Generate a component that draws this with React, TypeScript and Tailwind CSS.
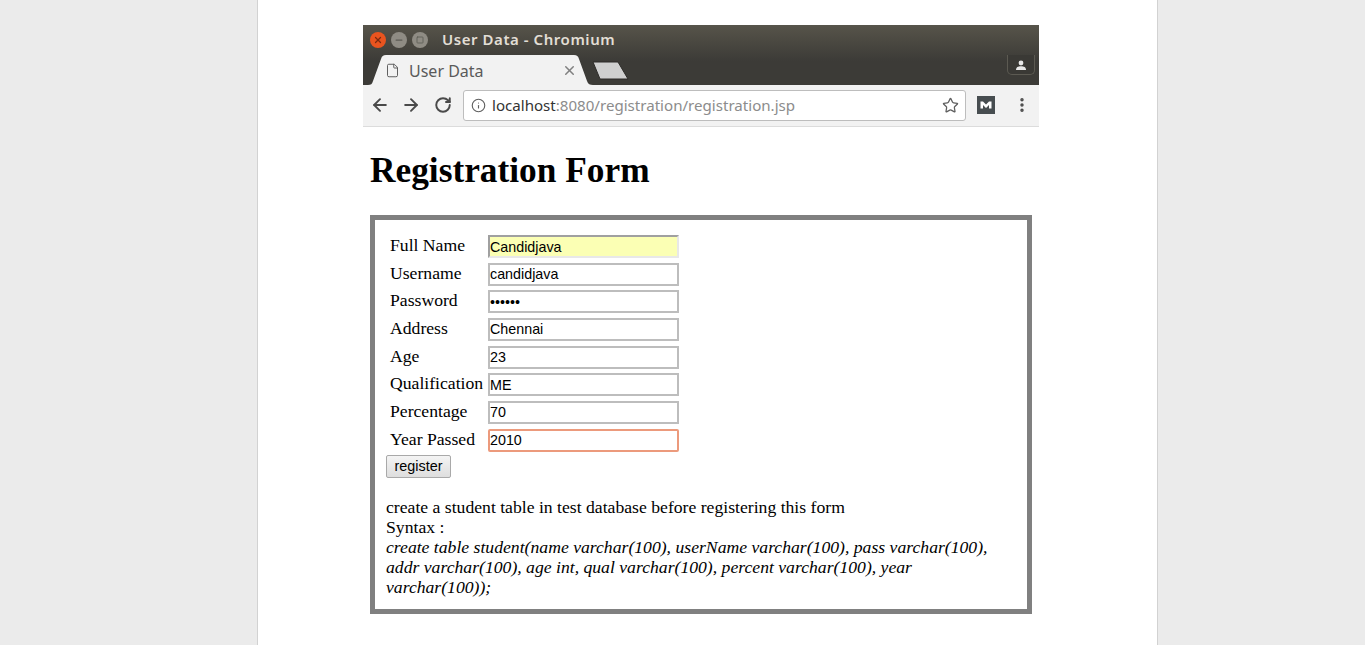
import { ArrowLeft, ArrowRight, Info, MoreVertical, RotateCw, Star, X, Minus, Square, File } from "lucide-react";

const fields = [
    { label: "Full Name", value: "Candidjava", className: "border-t-[#a0a0a0] border-l-[#a0a0a0] border-r-[#e8e8e8] border-b-[#e8e8e8] bg-[#fbffb4]" },
    { label: "Username", value: "candidjava", className: "border-[#bdbdbd] bg-white" },
    { label: "Password", value: "••••••", className: "border-[#bdbdbd] bg-white" },
    { label: "Address", value: "Chennai", className: "border-[#bdbdbd] bg-white" },
    { label: "Age", value: "23", className: "border-[#bdbdbd] bg-white" },
    { label: "Qualification", value: "ME", className: "border-[#bdbdbd] bg-white" },
    { label: "Percentage", value: "70", className: "border-[#bdbdbd] bg-white" },
    { label: "Year Passed", value: "2010", className: "rounded-[2px] border-[#ec9a7c] bg-white" },
];

function BrowserChrome() {
    return (
        <div className="w-[676px] font-['Noto_Sans',sans-serif]">
            <div className="relative h-[60px] overflow-hidden bg-gradient-to-b from-[#57544a] to-[#3c3b37] to-60%">
                <div className="flex h-[29px] items-center pl-[7px]">
                    <div className="flex h-4 w-4 items-center justify-center rounded-full bg-[#e9541f] text-[#7a2a10]">
                        <X className="h-2.5 w-2.5" strokeWidth={3} />
                    </div>
                    <div className="ml-[5px] flex h-4 w-4 items-center justify-center rounded-full bg-[#8f8c84] text-[#5d5b54]">
                        <Minus className="h-2.5 w-2.5" strokeWidth={3} />
                    </div>
                    <div className="ml-[5px] flex h-4 w-4 items-center justify-center rounded-full bg-[#8f8c84] text-[#5d5b54]">
                        <Square className="h-2 w-2" strokeWidth={2.5} />
                    </div>
                    <span className="ml-[14px] text-[15px] font-semibold tracking-[0.55px] text-[#e2ded5]">User Data - Chromium</span>
                </div>
                <div className="absolute bottom-0 left-[5px] h-[30px] w-[225px]">
                    <svg className="absolute inset-0" width="225" height="30" viewBox="0 0 225 30">
                        <path d="M0 30 C3 30 4 29 5 26 L13 4 C14 1 15 0 18 0 L206 0 C209 0 210 1 211 4 L219 26 C220 29 222 30 225 30 Z" fill="#f2f2f2" />
                    </svg>
                    <div className="relative flex h-full items-center pl-[17px]">
                        <File className="h-[15px] w-[15px] text-[#555555]" strokeWidth={1.5} />
                        <span className="ml-[9px] pt-[2px] text-[16px] text-[#5a5a5a]">User Data</span>
                        <X className="absolute left-[194px] top-[8px] h-[15px] w-[15px] text-[#808080]" strokeWidth={2.4} />
                    </div>
                </div>
                <svg className="absolute left-[229px] top-[36px]" width="38" height="19" viewBox="0 0 38 19">
                    <path d="M1 1 L26 1 L36 18 L8 18 Z" fill="#cfcfcf" stroke="#2c2b28" strokeWidth="1" />
                </svg>
                <div className="absolute right-[4px] top-[30px] flex h-5 w-[28px] items-center justify-center rounded-b-[5px] border border-t-0 border-[#5c5a52] bg-[#3a3935]">
                    <svg width="12" height="10" viewBox="0 0 12 10">
                        <circle cx="6" cy="3" r="2.4" fill="#e8e8e8" />
                        <path d="M1 10 C1 7 3 6.2 6 6.2 C9 6.2 11 7 11 10 Z" fill="#e8e8e8" />
                    </svg>
                </div>
            </div>
            <div className="flex h-[42px] items-center border-b border-[#dcdcdc] bg-[#f2f2f2] pb-px">
                <div className="flex w-[100px] items-center pl-[7px] text-[#4a4a4a]">
                    <ArrowLeft className="h-5 w-5" strokeWidth={2.3} />
                    <ArrowRight className="ml-[11px] h-5 w-5" strokeWidth={2.3} />
                    <RotateCw className="ml-[13px] h-[18px] w-[18px]" strokeWidth={2.6} />
                </div>
                <div className="flex h-[31px] w-[503px] items-center rounded-[3px] border border-[#bdbdbd] bg-white pl-[7px] text-[15.1px]">
                    <Info className="h-[15px] w-[15px] text-[#5f5f5f]" strokeWidth={1.8} />
                    <span className="ml-[6px] text-[#333333]">localhost</span>
                    <span className="text-[#8c8c8c]">:8080/registration/registration.jsp</span>
                    <Star className="ml-auto mr-[6px] h-[17px] w-[17px] text-[#5f5f5f]" strokeWidth={1.8} />
                </div>
                <svg className="ml-[11px]" width="18" height="18" viewBox="0 0 18 18">
                    <rect width="18" height="18" fill="#474d50" />
                    <path d="M3.5 12.5 V5.5 H6 L9 8.6 L12 5.5 H14.5 V12.5 H12 V9 L9 12 L6 9 V12.5 Z" fill="#ffffff" />
                </svg>
                <MoreVertical className="ml-[18px] h-[18px] w-[18px] text-[#4a4a4a]" strokeWidth={2.6} />
            </div>
        </div>
    );
}

export default function App() {
    return (
        <div className="h-[645px] overflow-hidden bg-[#ebebeb] pl-[257px]">
            <div className="h-full w-[901px] border-x border-[#d2d2d2] bg-white pl-[105px] pt-[25px]">
                <BrowserChrome />
                <div className="pl-[7px] font-['Liberation_Serif',serif] text-[17.67px] leading-[20px] text-black">
                    <h1 className="mt-[23px] text-[35.33px] font-bold leading-[41px]">Registration Form</h1>
                    <div className="mt-[24px] h-[399px] w-[662px] border-[5px] border-[#808080] bg-white pl-[11px] pt-[15px]">
                        <div className="grid grid-cols-[99px_191px] gap-y-[4.67px] pl-[3px]">
                            {fields.map((field) => (
                                <div key={field.label} className="contents">
                                    <div className="flex h-[23px] items-center pb-[3px] pl-[1px]">{field.label}</div>
                                    <div className={`flex h-[23px] items-center border-2 font-['Liberation_Sans',sans-serif] text-[14.3px] ${field.className}`}>
                                        {field.value}
                                    </div>
                                </div>
                            ))}
                        </div>
                        <button className="mt-[3px] block h-[23px] w-[65px] rounded-[2px] border border-[#a9a9a9] bg-gradient-to-b from-[#f4f4f4] to-[#dedede] font-['Liberation_Sans',sans-serif] text-[14.4px] text-black">
                            register
                        </button>
                        <p className="mt-[19px] w-[630px]">
                            create a student table in test database before registering this form
                            <br />
                            Syntax :
                            <br />
                            <i>create table student(name varchar(100), userName varchar(100), pass varchar(100), addr varchar(100), age int, qual varchar(100), percent varchar(100), year varchar(100));</i>
                        </p>
                    </div>
                </div>
            </div>
        </div>
    );
}
